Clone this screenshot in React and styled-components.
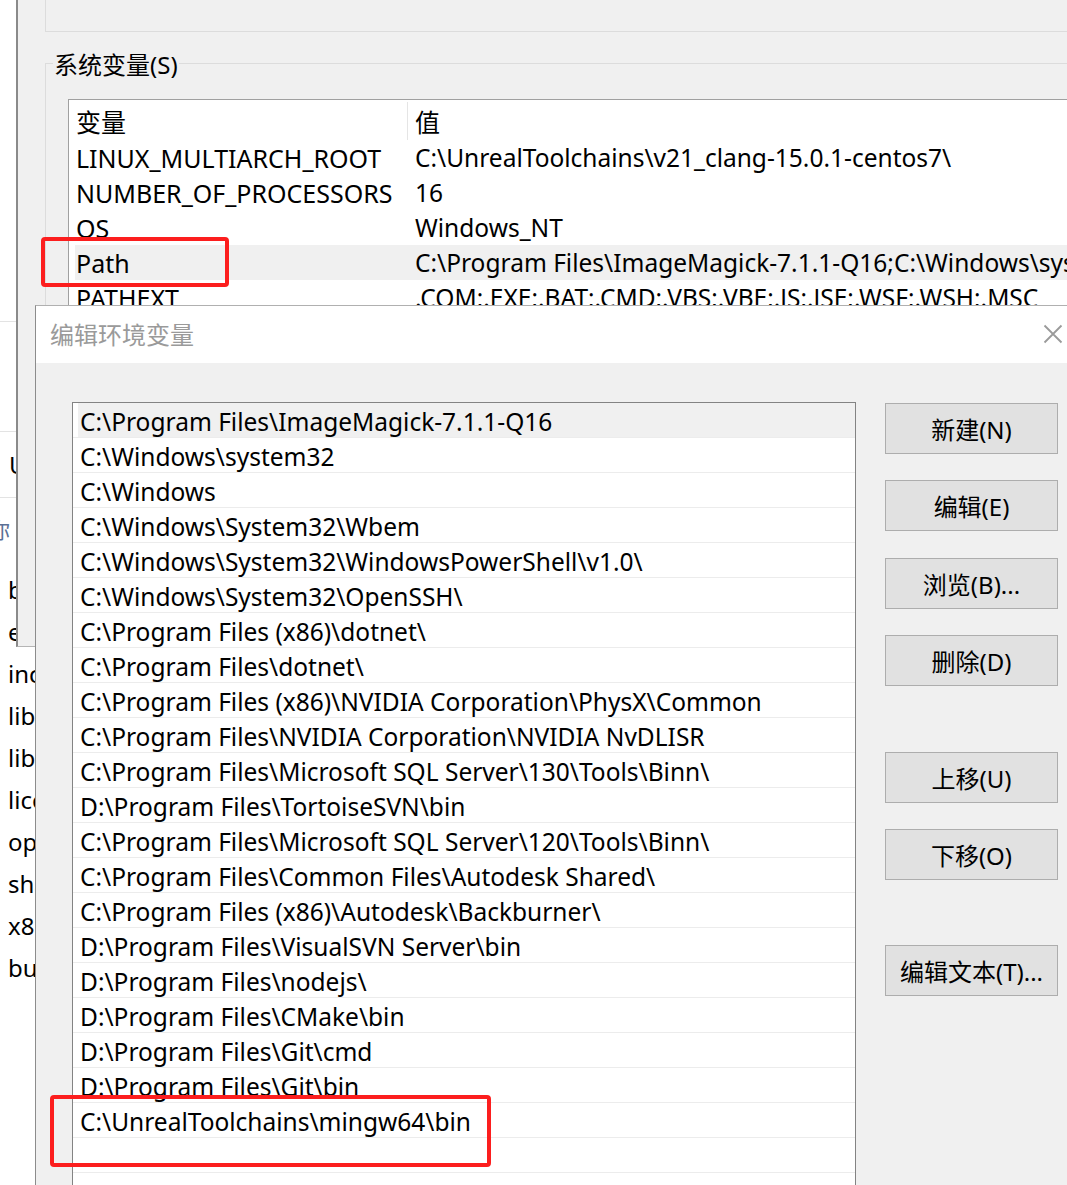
import React from "react";
import styled, { createGlobalStyle } from "styled-components";

const Global = createGlobalStyle`
  html, body { margin: 0; padding: 0; background: #ffffff; }
  body { font-family: "Noto Sans", "Noto Sans CJK SC", sans-serif; }
  * { box-sizing: border-box; }
`;

const FONT = `"Noto Sans", "Noto Sans CJK SC", sans-serif`;

const Screen = styled.div`
  position: relative;
  width: 1067px;
  height: 1185px;
  overflow: hidden;
  background: #ffffff;
  font-family: ${FONT};
  color: #000;
`;

/* ---------- explorer pane far behind ---------- */
const Explorer = styled.div`
  position: absolute;
  left: 0;
  top: 0;
  width: 36px;
  height: 1185px;
  overflow: hidden;
  background: #fff;
  display: flex;
  flex-direction: column;
`;
const ExBlank = styled.div`
  height: ${(p) => p.$h}px;
  border-bottom: ${(p) => (p.$line ? "1px solid #e3e3e3" : "none")};
  flex: none;
`;
const ExHeader = styled.div`
  height: 66px;
  border-bottom: 1px solid #e3e3e3;
  display: flex;
  align-items: center;
  padding-left: 9px;
  font-size: 24px;
  white-space: nowrap;
  flex: none;
`;
const ExNote = styled.div`
  height: 70px;
  padding-top: 14px;
  margin-left: -12px;
  font-size: 22px;
  color: #5b6f95;
  flex: none;
`;
const ExItem = styled.div`
  height: 42px;
  display: flex;
  align-items: center;
  padding-left: 8px;
  font-size: 24px;
  white-space: nowrap;
  flex: none;
`;

/* ---------- system properties window ---------- */
const SysWindow = styled.div`
  position: absolute;
  left: 16px;
  top: 0;
  width: 1080px;
  height: 647px;
  background: #f0f0f0;
  border-left: 2px solid #8a8a8a;
  border-bottom: 1px solid #b5b5b5;
  padding-left: 27px;
  display: flex;
  flex-direction: column;
`;
const TopBox = styled.div`
  height: 32px;
  border-left: 1px solid #dcdcdc;
  border-bottom: 1px solid #dcdcdc;
  flex: none;
`;
const Group = styled.div`
  margin-top: 31px;
  border-top: 1px solid #dcdcdc;
  border-left: 1px solid #dcdcdc;
  flex: 1;
  padding-left: 22px;
  display: flex;
  flex-direction: column;
`;
const Legend = styled.div`
  align-self: flex-start;
  margin-top: -15px;
  margin-left: -15px;
  padding: 0 1px;
  background: #f0f0f0;
  font-size: 24px;
  line-height: 32px;
`;
const VarTable = styled.div`
  margin-top: 18px;
  background: #fff;
  border-top: 1px solid #a0a0a0;
  border-left: 1px solid #a0a0a0;
  height: 600px;
`;
const VarRow = styled.div`
  display: grid;
  grid-template-columns: 333px 1fr;
  height: ${(p) => (p.$head ? 40 : 35)}px;
  margin-left: 6px;
  padding-top: ${(p) => (p.$head ? 2 : 0)}px;
  background: ${(p) => (p.$sel ? "#f0f0f0" : "transparent")};
  font-size: 25px;
  white-space: nowrap;
`;
const VarCell = styled.div`
  display: flex;
  align-items: center;
  padding-left: ${(p) => (p.$second ? 7 : 1)}px;
  border-right: ${(p) => (p.$sep ? "1px solid #e5e5e5" : "none")};
  overflow: hidden;
`;
const VarValue = styled.span`
  font-size: 24.5px;
`;

/* ---------- edit dialog ---------- */
const Dialog = styled.div`
  position: absolute;
  left: 35px;
  top: 305px;
  width: 1045px;
  height: 900px;
  border-left: 1px solid #8c8c8c;
  border-top: 1px solid #b0b0b0;
  background: #f0f0f0;
  display: flex;
  flex-direction: column;
`;
const TitleBar = styled.div`
  height: 57px;
  background: #fff;
  display: flex;
  align-items: center;
  justify-content: space-between;
  padding: 0 17px 2px 14px;
  flex: none;
`;
const Title = styled.div`
  font-size: 24px;
  color: #9a9a9a;
`;
const CloseBtn = styled.div`
  width: 20px;
  height: 20px;
  display: flex;
`;
const Body = styled.div`
  display: flex;
  align-items: flex-start;
  padding: 39px 0 0 36px;
  gap: 29px;
`;
const ListBox = styled.div`
  width: 784px;
  height: 820px;
  background: #fff;
  border: 1px solid #838383;
  flex: none;
`;
const PathRow = styled.div`
  height: 35px;
  border-bottom: 1px solid #ececec;
  padding-left: 5px;
  display: flex;
`;
const PathFill = styled.div`
  flex: 1;
  display: flex;
  align-items: center;
  padding: 2px 0 0 2px;
  font-size: 24.5px;
  white-space: nowrap;
  background: ${(p) => (p.$sel ? "#f0f0f0" : "transparent")};
`;
const ButtonCol = styled.div`
  display: flex;
  flex-direction: column;
  width: 173px;
  flex: none;
  padding-top: 1px;
`;
const Btn = styled.div`
  height: 51px;
  background: #e1e1e1;
  border: 1px solid #adadad;
  display: flex;
  align-items: center;
  justify-content: center;
  font-size: 24px;
  margin-top: ${(p) => p.$mt || 0}px;
`;

/* ---------- red annotation boxes ---------- */
const Mark = styled.div`
  position: absolute;
  border: 4px solid #fc1e1e;
  border-radius: 4px;
`;

const vars = [
  ["LINUX_MULTIARCH_ROOT", "C:\\UnrealToolchains\\v21_clang-15.0.1-centos7\\"],
  ["NUMBER_OF_PROCESSORS", "16"],
  ["OS", "Windows_NT"],
  ["Path", "C:\\Program Files\\ImageMagick-7.1.1-Q16;C:\\Windows\\system32;C:\\Windows"],
  ["PATHEXT", ".COM;.EXE;.BAT;.CMD;.VBS;.VBE;.JS;.JSE;.WSF;.WSH;.MSC"],
];

const paths = [
  "C:\\Program Files\\ImageMagick-7.1.1-Q16",
  "C:\\Windows\\system32",
  "C:\\Windows",
  "C:\\Windows\\System32\\Wbem",
  "C:\\Windows\\System32\\WindowsPowerShell\\v1.0\\",
  "C:\\Windows\\System32\\OpenSSH\\",
  "C:\\Program Files (x86)\\dotnet\\",
  "C:\\Program Files\\dotnet\\",
  "C:\\Program Files (x86)\\NVIDIA Corporation\\PhysX\\Common",
  "C:\\Program Files\\NVIDIA Corporation\\NVIDIA NvDLISR",
  "C:\\Program Files\\Microsoft SQL Server\\130\\Tools\\Binn\\",
  "D:\\Program Files\\TortoiseSVN\\bin",
  "C:\\Program Files\\Microsoft SQL Server\\120\\Tools\\Binn\\",
  "C:\\Program Files\\Common Files\\Autodesk Shared\\",
  "C:\\Program Files (x86)\\Autodesk\\Backburner\\",
  "D:\\Program Files\\VisualSVN Server\\bin",
  "D:\\Program Files\\nodejs\\",
  "D:\\Program Files\\CMake\\bin",
  "D:\\Program Files\\Git\\cmd",
  "D:\\Program Files\\Git\\bin",
  "C:\\UnrealToolchains\\mingw64\\bin",
  "",
  "",
];

const exItems = ["bin", "etc", "include", "lib", "libexec", "licenses", "opt", "share", "x86_64-w64-mingw32", "build-info.txt"];

export default function App() {
  return (
    <Screen>
      <Global />
      <Explorer>
        <ExBlank $h={322} $line />
        <ExBlank $h={110} $line />
        <ExHeader>UnrealToolchains</ExHeader>
        <ExNote>你</ExNote>
        {exItems.map((t) => (
          <ExItem key={t}>{t}</ExItem>
        ))}
      </Explorer>

      <SysWindow>
        <TopBox />
        <Group>
          <Legend>系统变量(S)</Legend>
          <VarTable>
            <VarRow $head>
              <VarCell $sep>变量</VarCell>
              <VarCell $second>值</VarCell>
            </VarRow>
            {vars.map(([k, v]) => (
              <VarRow key={k} $sel={k === "Path"}>
                <VarCell>{k}</VarCell>
                <VarCell $second>
                  <VarValue>{v}</VarValue>
                </VarCell>
              </VarRow>
            ))}
          </VarTable>
        </Group>
      </SysWindow>

      <Dialog>
        <TitleBar>
          <Title>编辑环境变量</Title>
          <CloseBtn>
            <svg width="20" height="20" viewBox="0 0 20 20">
              <path d="M1.5 1.5 L18.5 18.5 M18.5 1.5 L1.5 18.5" stroke="#9a9a9a" strokeWidth="1.8" fill="none" />
            </svg>
          </CloseBtn>
        </TitleBar>
        <Body>
          <ListBox>
            {paths.map((p, i) => (
              <PathRow key={i}>
                <PathFill $sel={i === 0}>{p}</PathFill>
              </PathRow>
            ))}
          </ListBox>
          <ButtonCol>
            <Btn>新建(N)</Btn>
            <Btn $mt={26}>编辑(E)</Btn>
            <Btn $mt={27}>浏览(B)...</Btn>
            <Btn $mt={26}>删除(D)</Btn>
            <Btn $mt={66}>上移(U)</Btn>
            <Btn $mt={26}>下移(O)</Btn>
            <Btn $mt={65}>编辑文本(T)...</Btn>
          </ButtonCol>
        </Body>
      </Dialog>

      <Mark style={{ left: 41, top: 237, width: 188, height: 50 }} />
      <Mark style={{ left: 50, top: 1095, width: 441, height: 72 }} />
    </Screen>
  );
}
